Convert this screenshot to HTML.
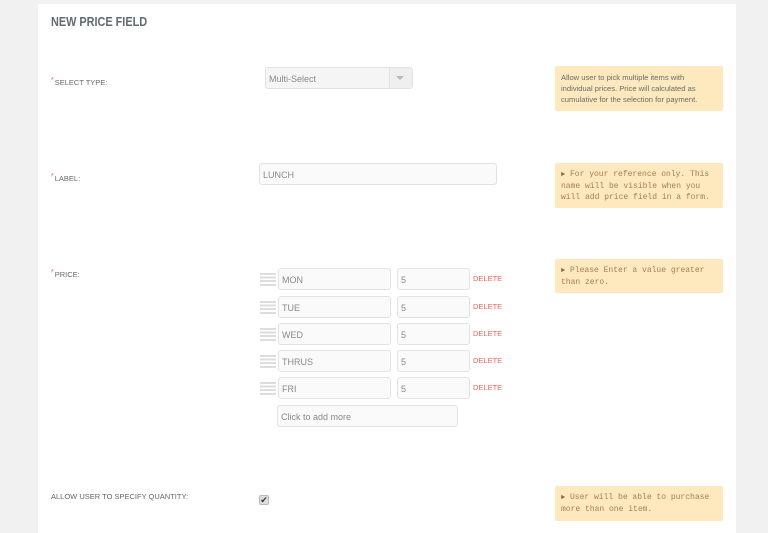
<!DOCTYPE html>
<html><head><meta charset="utf-8"><style>
*{margin:0;padding:0;box-sizing:border-box}
html,body{width:768px;height:533px;overflow:hidden}
body{background:#f1f1f1;font-family:"Liberation Sans",sans-serif;position:relative}
.panel{position:absolute;left:38px;top:4px;width:698px;height:529px;background:#fff}
.a{position:absolute}
h1{position:absolute;left:51px;top:15px;font-size:12.5px;font-weight:bold;color:#5f6b74;transform:scaleX(0.87);transform-origin:left;white-space:nowrap}
.lbl{position:absolute;left:51px;font-size:7.5px;color:#666;text-transform:uppercase}
.lbl i{color:#e55;font-style:normal;font-size:7px;vertical-align:3px;margin-right:1px}
.inp{position:absolute;height:22px;border:1px solid #e2e2e2;border-radius:3px;background:#fafafa;font-size:9px;color:#888;padding:6px 0 0 3px}
.del{position:absolute;left:473px;font-size:7.5px;color:#f06060}
.h{position:absolute;left:260px;width:16px;height:13px;background:repeating-linear-gradient(#ddd 0 2px,transparent 2px 3.6px)}
.note{position:absolute;left:555px;width:168px;background:#fde9bd;border-radius:2px;padding:6px 6px;font-size:7.6px;line-height:11px;color:#6a6a6a}
.mono{font-family:"Liberation Mono",monospace;color:#a67c52;font-size:8px;line-height:11px}
.mono b{font-size:7px;font-weight:normal;color:#8a6a4a}
</style></head><body>
<div class="panel"></div>
<h1>NEW PRICE FIELD</h1>
<div class="lbl" style="top:77px"><i>*</i>SELECT TYPE:</div>
<div class="lbl" style="top:173px"><i>*</i>LABEL:</div>
<div class="lbl" style="top:269px"><i>*</i>PRICE:</div>
<div class="lbl" style="top:492px;left:51px">ALLOW USER TO SPECIFY QUANTITY:</div>

<div class="inp" style="left:265px;top:67px;width:148px;background:#f5f5f5">Multi-Select</div>
<div class="a" style="left:389px;top:68px;width:23px;height:20px;border-left:1px solid #e2e2e2;background:#efefef"></div>
<div class="a" style="left:396px;top:76px;width:0;height:0;border-left:4px solid transparent;border-right:4px solid transparent;border-top:4px solid #bbb"></div>

<div class="inp" style="left:259px;top:163px;width:238px">LUNCH</div>

<div class="h" style="top:273px"></div>
<div class="inp" style="left:278px;top:268px;width:113px">MON</div>
<div class="inp" style="left:397px;top:268px;width:73px">5</div>
<div class="del" style="top:274px">DELETE</div>

<div class="h" style="top:301px"></div>
<div class="inp" style="left:278px;top:296px;width:113px">TUE</div>
<div class="inp" style="left:397px;top:296px;width:73px">5</div>
<div class="del" style="top:302px">DELETE</div>

<div class="h" style="top:328px"></div>
<div class="inp" style="left:278px;top:323px;width:113px">WED</div>
<div class="inp" style="left:397px;top:323px;width:73px">5</div>
<div class="del" style="top:329px">DELETE</div>

<div class="h" style="top:355px"></div>
<div class="inp" style="left:278px;top:350px;width:113px">THRUS</div>
<div class="inp" style="left:397px;top:350px;width:73px">5</div>
<div class="del" style="top:356px">DELETE</div>

<div class="h" style="top:382px"></div>
<div class="inp" style="left:278px;top:377px;width:113px">FRI</div>
<div class="inp" style="left:397px;top:377px;width:73px">5</div>
<div class="del" style="top:383px">DELETE</div>

<div class="inp" style="left:277px;top:405px;width:181px">Click to add more</div>

<div class="a" style="left:259px;top:495px;width:10px;height:10px;background:#ddd;border:1px solid #bbb;border-radius:2px;font-size:9px;line-height:8px;text-align:center;color:#333">✔</div>

<div class="note" style="top:66px;height:45px">Allow user to pick multiple items with individual prices. Price will calculated as cumulative for the selection for payment.</div>
<div class="note mono" style="top:163px;height:45px"><b>►</b> For your reference only. This name will be visible when you will add price field in a form.</div>
<div class="note mono" style="top:259px;height:34px"><b>►</b> Please Enter a value greater than zero.</div>
<div class="note mono" style="top:486px;height:35px"><b>►</b> User will be able to purchase more than one item.</div>
</body></html>
